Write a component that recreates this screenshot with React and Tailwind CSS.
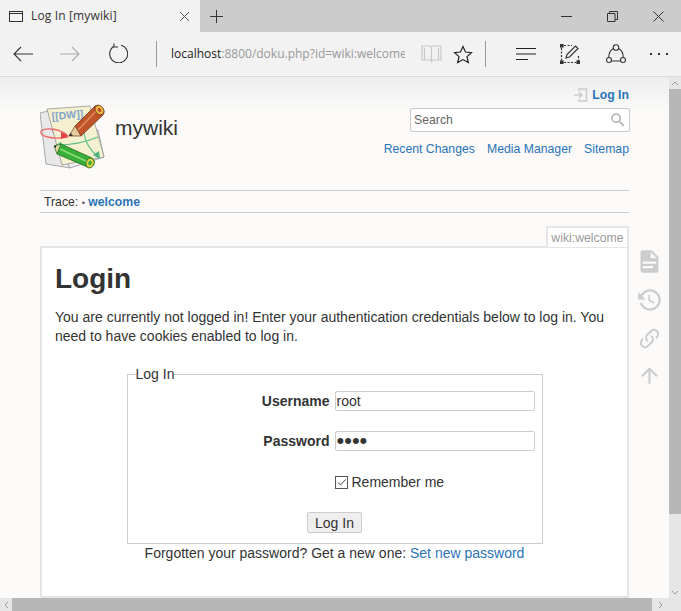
const ui = { fontFamily: '"Open Sans", "Noto Sans", sans-serif' };

function Chrome() {
  return (
    <div style={ui} className="shrink-0">
      <div className="flex h-8 bg-[#cccccc]">
        <div className="flex w-[200px] items-center bg-[#f2f2f2] pl-[9px] text-[#333]">
          <svg width="15" height="13" viewBox="0 0 15 13" fill="none" stroke="#333" strokeWidth="1">
            <rect x="0.5" y="1.5" width="13" height="10" />
            <path d="M0.5 3.5h13" />
          </svg>
          <span className="ml-[7px] w-[148px] text-[12px] tracking-[0.15px]">Log In [mywiki]</span>
          <svg width="11" height="11" viewBox="0 0 11 11" stroke="#555" strokeWidth="1">
            <path d="M1 1l9 9M10 1l-9 9" />
          </svg>
        </div>
        <div className="flex w-[33px] items-center justify-center">
          <svg width="13" height="13" viewBox="0 0 13 13" stroke="#333" strokeWidth="1">
            <path d="M6.5 0v13M0 6.5h13" />
          </svg>
        </div>
        <div className="ml-auto flex items-center">
          <div className="flex w-[46px] justify-center">
            <svg width="11" height="11" viewBox="0 0 11 11" stroke="#333"><path d="M0 5.5h11" /></svg>
          </div>
          <div className="flex w-[46px] justify-center">
            <svg width="11" height="11" viewBox="0 0 11 11" fill="none" stroke="#333">
              <path d="M0.5 2.5h7.5v8h-7.5zM2.5 2.5v-2h8v8h-2.5" />
            </svg>
          </div>
          <div className="flex w-[46px] justify-center">
            <svg width="11" height="11" viewBox="0 0 11 11" stroke="#333"><path d="M0.5 0.5l10 10M10.5 0.5l-10 10" /></svg>
          </div>
        </div>
      </div>
      <div className="flex h-[45px] items-center border-b border-[#d9d9d9] bg-[#f2f2f2]">
        <div className="flex w-[46px] justify-center">
          <svg width="20" height="16" viewBox="0 0 20 16" fill="none" stroke="#333" strokeWidth="1.1"><path d="M20 8H1M8 1L1 8l7 7" /></svg>
        </div>
        <div className="flex w-[48px] justify-center">
          <svg width="20" height="16" viewBox="0 0 20 16" fill="none" stroke="#aaa" strokeWidth="1.1"><path d="M0 8h19M12 1l7 7-7 7" /></svg>
        </div>
        <div className="flex w-[47px] justify-center pb-0.5">
          <svg width="20" height="20" viewBox="0 0 20 20" fill="none" stroke="#333" strokeWidth="1.1">
            <path d="M6 3.2A9 9 0 1 0 13 2.2M6 0.5v3.5h4" />
          </svg>
        </div>
        <div className="ml-[15px] h-[26px] w-px bg-[#999]" />
        <div className="ml-[14px] w-[234px] overflow-hidden whitespace-nowrap text-[12px] text-[#999]">
          <span className="text-[#222]">localhost</span>:8800/doku.php?id=wiki:welcome
        </div>
        <div className="ml-[16px] flex w-[21px] justify-center">
          <svg width="21" height="18" viewBox="0 0 21 18" fill="none" stroke="#c8c8c8" strokeWidth="1.2">
            <path d="M1 1h7.500c1 0 1.700.5 2 1.500.3-1 1-1.500 2-1.500H20v14h-7.500c-1 0-1.700.5-2 1.500-.3-1-1-1.500-2-1.500H1zM10.500 2.500v14M3.500 3v12M17.500 3v12" />
          </svg>
        </div>
        <div className="ml-[11px] flex w-5 justify-center">
          <svg width="20" height="19" viewBox="0 0 20 19" fill="none" stroke="#222" strokeWidth="1.2">
            <path d="M10 1.5l2.5 5.5 6 .6-4.5 4 1.3 6L10 14.6l-5.300 3 1.300-6-4.500-4 6-.6z" />
          </svg>
        </div>
        <div className="ml-[12px] h-[26px] w-px bg-[#999]" />
        <div className="ml-[30px] flex w-5">
          <svg width="20" height="14" viewBox="0 0 20 14" stroke="#222" strokeWidth="1.2"><path d="M0 1.500h20M0 7h20M0 12.500h12" /></svg>
        </div>
        <div className="ml-6 flex w-5">
          <svg width="20" height="20" viewBox="0 0 20 20" fill="none" stroke="#333" strokeWidth="1.2">
            <path d="M1.500 4v12M18.500 12v6M4 18.500h12M4 1.500h8" strokeDasharray="2 1.500" />
            <path d="M6 14l1-3.500L15.500 2l2.500 2.500L9.500 13z" />
            <rect x="0.500" y="0.500" width="2.500" height="2.500" fill="#333" />
            <rect x="0.500" y="17" width="2.500" height="2.500" fill="#333" />
            <rect x="17" y="17" width="2.500" height="2.500" fill="#333" />
          </svg>
        </div>
        <div className="ml-[26px] flex w-5">
          <svg width="20" height="20" viewBox="0 0 20 20" fill="none" stroke="#333" strokeWidth="1.1">
            <circle cx="10" cy="3.500" r="2.800" />
            <circle cx="3" cy="16" r="2.500" />
            <circle cx="17" cy="16" r="2.500" />
            <path d="M7.500 4.500C4.500 6 2.800 9.500 2.700 13.500M12.500 4.500c3 1.500 4.700 5 4.800 9M5.500 17h9" />
          </svg>
        </div>
        <div className="ml-6 flex w-[18px] justify-between">
          <span className="h-0.5 w-0.5 bg-[#333]" />
          <span className="h-0.5 w-0.5 bg-[#333]" />
          <span className="h-0.5 w-0.5 bg-[#333]" />
        </div>
      </div>
    </div>
  );
}

function Logo() {
  return (
    <svg width="66" height="70" viewBox="0 0 66 70">
      {/* sheets */}
      <path d="M0 13l8-2 22 57-24-4z" fill="#e8e8e8" stroke="#8a8a8a" strokeWidth="0.7" />
      <path d="M12 30l46 0 6 27-34 11z" fill="#efefef" stroke="#8a8a8a" strokeWidth="0.7" />
      <path d="M7 9l43-3 14 51-42 8z" fill="#f5f0cf" stroke="#8a8a8a" strokeWidth="0.7" />
      <text x="12" y="20" fontFamily="Liberation Sans, sans-serif" fontWeight="700" fontSize="10.500" fill="#7fa3c9" transform="rotate(-5 12 20)">[[DW]]</text>
      {/* red arrow */}
      <path d="M27 35C20 29 6 27 1 31c-2 5 10 9 27 6" fill="none" stroke="#f06a6a" strokeWidth="1.300" />
      <path d="M29 36l-8-4v7z" fill="#e04545" />
      {/* green arrows */}
      <path d="M17 45c13 0 27-2 41-8" fill="none" stroke="#5cc08c" strokeWidth="1.200" />
      <path d="M44 33c1 9 6 17 14 24" fill="none" stroke="#5cc08c" strokeWidth="1.200" />
      <path d="M60 59l-1-8-6 4z" fill="#4db27f" />
      <path d="M14 46l7-4 2 6z" fill="#4db27f" />
      {/* red pencil */}
      <path d="M35 26L55 6c3-2 8 0 9 5 .3 2-.5 3-1 4L41 36z" fill="#c2542a" stroke="#6b3a1d" strokeWidth="0.8" />
      <path d="M38 30l20-21" stroke="#e08a5f" strokeWidth="1.500" fill="none" />
      <path d="M35 26l-6 10 12 0z" fill="#e6cc9c" stroke="#6b3a1d" strokeWidth="0.7" />
      <path d="M29 36l1.500-3.500 2.500 3.500z" fill="#333" />
      <ellipse cx="59.500" cy="10" rx="4" ry="5" transform="rotate(-35 59.500 10)" fill="#e9bf4a" stroke="#6b3a1d" strokeWidth="0.7" />
      <ellipse cx="59.500" cy="10" rx="1.800" ry="2.400" transform="rotate(-35 59.500 10)" fill="#c2542a" />
      {/* green pencil */}
      <path d="M21 44L52 58c3 2 3 7-1 9-1 .5-2 .5-3 .2L17 54z" fill="#38b038" stroke="#1f6e1f" strokeWidth="0.8" />
      <path d="M20 49l30 14" stroke="#8ddc7a" strokeWidth="1.500" fill="none" />
      <path d="M21 44l-7 2 3 8z" fill="#e6d8a4" stroke="#1f6e1f" strokeWidth="0.7" />
      <path d="M14 46l2.500-.7-1 3z" fill="#222" />
      <ellipse cx="50" cy="63" rx="4" ry="5" transform="rotate(20 50 63)" fill="#e8d44a" stroke="#1f6e1f" strokeWidth="0.8" />
      <ellipse cx="50" cy="63" rx="1.800" ry="2.400" transform="rotate(20 50 63)" fill="#38b038" />
    </svg>
  );
}

function Header() {
  return (
    <div>
      <div className="flex h-[113px] pt-[9px]">
        <div className="flex items-start">
          <div className="mt-[14px]"><Logo /></div>
          <div className="ml-[9px] mt-[27px] text-[21px] leading-[30px] text-[#333]">mywiki</div>
        </div>
        <div className="-mr-px ml-auto mt-px flex w-[260px] flex-col items-end">
          <div className="flex h-[16px] items-center">
            <svg width="14" height="14" viewBox="0 0 14 14" fill="none" stroke="#ccc" strokeWidth="1.500" className="mr-[4px]">
              <path d="M5 3V1h7.500v12H5v-2M0 7h7M5 4l3 3-3 3" />
            </svg>
            <a className="mr-[1px] text-[12.25px] font-bold text-[#2b73b7]">Log In</a>
          </div>
          <div className="mt-[5px] flex h-[24px] w-[220px] items-center rounded-[2px] border border-[#cccccc] bg-white pl-[3px] pr-[2px] shadow-[inset_0_0_1px_#ddd]">
            <input placeholder="Search" className="min-w-0 flex-1 text-[12.25px] text-[#333] outline-none placeholder:text-[#666]" />
            <svg width="18" height="18" viewBox="0 0 24 24" fill="#b0b0b0">
              <path d="M9.500 3A6.500 6.500 0 0 1 16 9.500c0 1.610-.59 3.090-1.560 4.230l.27.27h.79l5 5-1.500 1.500-5-5v-.79l-.27-.27A6.516 6.516 0 0 1 9.500 16 6.500 6.500 0 0 1 3 9.500 6.500 6.500 0 0 1 9.500 3m0 2C7 5 5 7 5 9.500S7 14 9.500 14 14 12 14 9.500 12 5 9.500 5z" />
            </svg>
          </div>
          <div className="mr-px mt-[9px] flex gap-3 text-[12.25px] leading-[16px] text-[#2b73b7]">
            <a>Recent Changes</a>
            <a>Media Manager</a>
            <a>Sitemap</a>
          </div>
        </div>
      </div>
      <div className="h-[23px] border-y border-[#cccccc] pl-1 text-[12.25px] leading-[23px] text-[#333]">
        Trace: <span className="text-[9px] text-[#555]">•</span> <a className="font-bold text-[#2b73b7]">welcome</a>
      </div>
    </div>
  );
}

function PageTools() {
  return (
    <div className="flex w-10 shrink-0 flex-col items-center gap-3 pt-px">
      <svg width="27" height="27" viewBox="0 0 24 24" fill="#cccccc">
        <path d="M13 9h5.500L13 3.500V9M6 2h8l6 6v12a2 2 0 0 1-2 2H6c-1.110 0-2-.9-2-2V4c0-1.110.89-2 2-2m9 16v-2H6v2h9m3-4v-2H6v2h12z" />
      </svg>
      <svg width="27" height="27" viewBox="0 0 24 24" fill="#cccccc">
        <path d="M11 7v5.110l4.710 2.790.79-1.280-4-2.370V7M12.500 2C8.970 2 5.910 3.920 4.270 6.770L2 4.500V11h6.500L5.750 8.250C6.960 5.730 9.500 4 12.500 4a7.500 7.500 0 0 1 7.500 7.500 7.500 7.500 0 0 1-7.500 7.500c-3.270 0-6.030-2.090-7.060-5h-2.100c1.100 4.030 4.770 7 9.160 7 5.250 0 9.500-4.250 9.500-9.500S17.750 2 12.500 2z" />
      </svg>
      <svg width="25" height="25" viewBox="0 0 24 24" fill="#cccccc">
        <path d="M10.590 13.410c.41.390.41 1.030 0 1.420-.39.390-1.030.39-1.420 0a5.003 5.003 0 0 1 0-7.070l3.540-3.540a5.003 5.003 0 0 1 7.070 0 5.003 5.003 0 0 1 0 7.070l-1.490 1.490c.01-.82-.12-1.640-.4-2.420l.47-.48a2.982 2.982 0 0 0 0-4.240 2.982 2.982 0 0 0-4.240 0l-3.530 3.530a2.982 2.982 0 0 0 0 4.240m2.820-4.240c.39-.39 1.030-.39 1.420 0a5.003 5.003 0 0 1 0 7.070l-3.540 3.540a5.003 5.003 0 0 1-7.070 0 5.003 5.003 0 0 1 0-7.070l1.490-1.490c-.01.82.12 1.640.4 2.430l-.47.47a2.982 2.982 0 0 0 0 4.240 2.982 2.982 0 0 0 4.240 0l3.530-3.530a2.982 2.982 0 0 0 0-4.240.973.973 0 0 1 0-1.420z" />
      </svg>
      <svg width="25" height="25" viewBox="0 0 24 24" fill="#cccccc">
        <path d="M13 20h-2V8l-5.500 5.500-1.420-1.420L12 4.160l7.920 7.920-1.420 1.420L13 8v12z" />
      </svg>
    </div>
  );
}

function LoginForm() {
  return (
    <form className="mx-auto mt-[20px] w-[416px]">
      <fieldset className="h-[178px] border border-[#cccccc] px-[7px]">
        <legend className="ml-px text-[14px] leading-[16px] text-[#333]">Log In</legend>
        <div className="flex flex-col items-start pl-[93px]">
          <label className="mt-[9px] flex h-5 w-[307px] items-center justify-end gap-[5px]">
            <span className="font-bold text-[#333]">Username</span>
            <input defaultValue="root" className="h-5 w-[200px] rounded-[2px] border border-[#cccccc] bg-white px-[1px] text-[14px] text-[#333] outline-none" />
          </label>
          <label className="mt-[20px] flex h-5 w-[307px] items-center justify-end gap-[5px]">
            <span className="font-bold text-[#333]">Password</span>
            <input type="password" defaultValue="root" className="h-5 w-[200px] rounded-[2px] border border-[#cccccc] bg-white px-[1px] text-[22px] leading-none text-[#333] outline-none" />
          </label>
          <label className="ml-[107px] mt-[21px] flex h-5 items-center gap-[4px] text-[#333]">
            <span className="flex h-[13px] w-[13px] items-center justify-center border border-[#555] bg-white">
              <svg width="11" height="11" viewBox="0 0 11 11" fill="none" stroke="#444" strokeWidth="1"><path d="M2 5.500l2.500 2.500L9.500 2.500" /></svg>
            </span>
            Remember me
          </label>
        </div>
        <div className="mt-[20px] flex justify-center">
          <button type="button" className="h-[21px] w-[55px] rounded-[2px] border border-[#cccccc] bg-[#eeeeee] text-[14px] leading-[18px] text-[#333]">Log In</button>
        </div>
      </fieldset>
      <p className="text-center text-[14px] leading-[18px] text-[#333]">
        Forgotten your password? Get a new one: <a className="text-[#2b73b7]">Set new password</a>
      </p>
    </form>
  );
}

export default function App() {
  return (
    <div className="flex h-[611px] w-[681px] flex-col overflow-hidden bg-[#fbfaf9] text-[14px]" style={{ fontFamily: '"Liberation Sans", Arial, sans-serif' }}>
      <Chrome />
      <div className="flex min-h-0 flex-1">
        <div className="min-w-0 flex-1 bg-gradient-to-b from-[#eeeeee] to-[#fbfaf9] to-[34px] pl-10">
          <div className="w-[589px]"><Header /></div>
          <div className="flex">
            <div className="w-[589px] shrink-0">
              <div className="mt-[12px] flex justify-end">
                <div className="relative top-px z-10 h-[21px] rounded-t-[2px] border-x-2 border-t-2 border-[#e6e6e6] border-b-0 bg-white px-[3.5px] text-[12.25px] leading-[20px] text-[#999]">wiki:welcome</div>
              </div>
              <div className="h-[352px] rounded-[2px] border-2 border-[#e4e4e4] bg-white px-[13px] pt-[11px] text-[#333]">
                <h1 className="text-[28px] font-bold leading-[40px]">Login</h1>
                <p className="mt-[9px] w-[560px] leading-[19px]">You are currently not logged in! Enter your authentication credentials below to log in. You need to have cookies enabled to log in.</p>
                <LoginForm />
              </div>
            </div>
            <div className="mt-[34px]"><PageTools /></div>
          </div>
        </div>
        <div className="flex w-3 shrink-0 flex-col bg-[#e6e6e6]">
          <div className="flex h-3 items-center justify-center">
            <svg width="8" height="5" viewBox="0 0 8 5" fill="none" stroke="#999"><path d="M1 4l3-3 3 3" /></svg>
          </div>
          <div className="h-[425px] bg-[#b7b7b7]" />
          <div className="mt-auto flex h-3 items-center justify-center">
            <svg width="8" height="5" viewBox="0 0 8 5" fill="none" stroke="#999"><path d="M1 1l3 3 3-3" /></svg>
          </div>
        </div>
      </div>
      <div className="flex h-[13px] shrink-0 items-center bg-[#e6e6e6]">
        <div className="flex w-3 justify-center">
          <svg width="5" height="8" viewBox="0 0 5 8" fill="none" stroke="#999"><path d="M4 1L1 4l3 3" /></svg>
        </div>
        <div className="h-full w-[640px] bg-[#b7b7b7]" />
        <div className="flex w-[17px] justify-center">
          <svg width="5" height="8" viewBox="0 0 5 8" fill="none" stroke="#999"><path d="M1 1l3 3-3 3" /></svg>
        </div>
      </div>
    </div>
  );
}
